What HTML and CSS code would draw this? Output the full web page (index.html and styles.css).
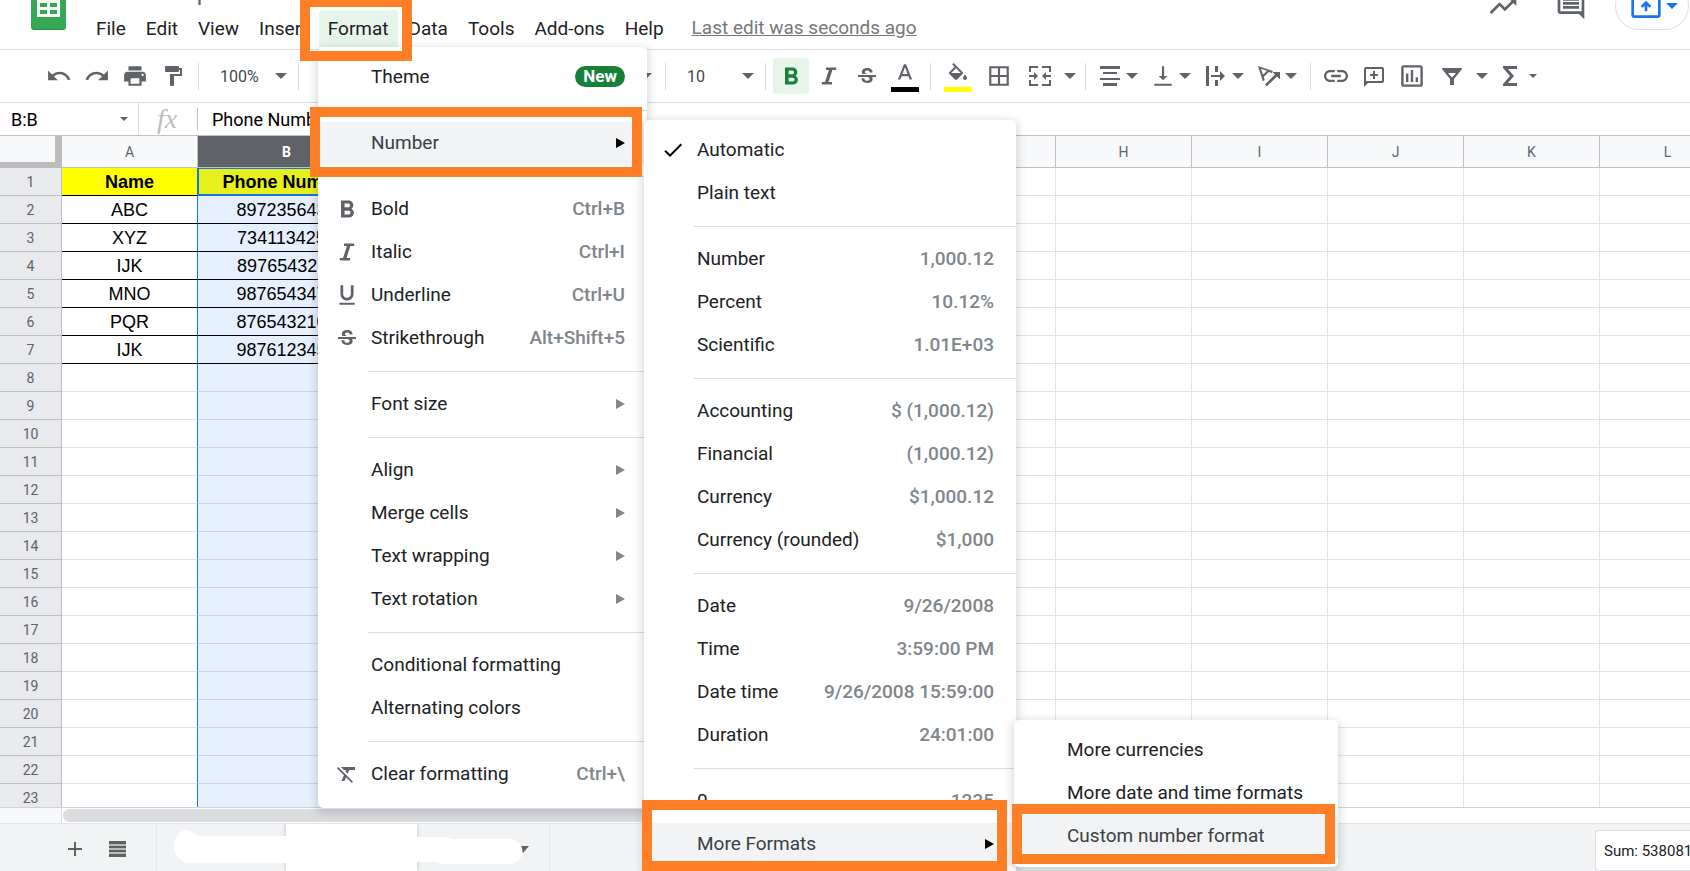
FILE: index.html
```html
<!DOCTYPE html>
<html lang="en">
    <head>
        <meta charset="UTF-8" />
        <meta name="viewport" content="width=device-width, initial-scale=1.0" />
        <title>Untitled spreadsheet</title>
        <link rel="stylesheet" href="styles.css">
    </head>
    <body>
        <header id="header">
            <svg class="logo" width="35" height="48" viewBox="0 0 35 48">
                <path fill="#34a853" d="M3 0h20l12 12v33a3 3 0 0 1-3 3H3a3 3 0 0 1-3-3V3a3 3 0 0 1 3-3z" />
                <path fill="#fff" d="M6 18h23v17H6z" />
                <path fill="#34a853" d="M9 21h7v4H9zM19 21h7v4h-7zM9 28h7v4H9zM19 28h7v4h-7z" />
                <path fill="#2a9048" d="M1 47h33l-2 1H3z" />
            </svg>

            <div class="titles">
                <div class="doc-title">Untitled spreadsheet</div>
                <nav class="menubar">
                    <button>File</button>
                    <button>Edit</button>
                    <button>View</button>
                    <button>Insert</button>
                    <button class="open">Format</button>
                    <button>Data</button>
                    <button>Tools</button>
                    <button>Add-ons</button>
                    <button>Help</button>
                    <a href="#" class="last-edit">Last edit was seconds ago</a>
                </nav>
            </div>

            <div class="actions">
                <button aria-label="Activity">
                    <svg width="32" height="32" viewBox="0 0 24 24"><path d="M16 6l2.29 2.29-4.88 4.88-4-4L2 16.59 3.41 18l6-6 4 4 6.3-6.29L22 12V6z" /></svg>
                </button>
                <button aria-label="Comments">
                    <svg width="32" height="32" viewBox="0 0 24 24"><path fill-rule="evenodd" d="M21.99 4c0-1.1-.89-2-1.99-2H4c-1.1 0-2 .9-2 2v12c0 1.1.9 2 2 2h14l4 4-.01-18zM20 4v12H4V4h16zM6 12h12v2H6zm0-3h12v2H6zm0-3h12v2H6z" /></svg>
                </button>
                <button class="present" aria-label="Present">
                    <svg width="32" height="32" viewBox="0 0 24 24"><path fill-rule="evenodd" d="M21 3H3c-1.11 0-2 .89-2 2v14c0 1.11.89 2 2 2h18c1.11 0 2-.89 2-2V5c0-1.11-.89-2-2-2zm0 16H3V5h18v14zM12 8l-4 4 1.4 1.4 1.6-1.6V16h2v-4.2l1.6 1.6L16 12z" /></svg>
                    <i class="caret"></i>
                </button>
            </div>
        </header>

        <div id="toolbar">
            <button class="tool" aria-label="Undo"><svg viewBox="1 1 22 22"><path d="M12.5 8c-2.65 0-5.05.99-6.9 2.6L2 7v9h9l-3.62-3.62c1.39-1.16 3.16-1.88 5.12-1.88 3.54 0 6.55 2.31 7.6 5.5l2.37-.78C21.08 11.03 17.15 8 12.5 8z" /></svg></button>
            <button class="tool" aria-label="Redo"><svg viewBox="1 1 22 22"><path d="M18.4 10.6C16.55 8.99 14.15 8 11.5 8c-4.65 0-8.58 3.03-9.96 7.22L3.9 16c1.05-3.19 4.05-5.5 7.6-5.5 1.95 0 3.73.72 5.12 1.88L13 16h9V7l-3.6 3.6z" /></svg></button>
            <button class="tool" aria-label="Print"><svg viewBox="1 1 22 22"><path d="M19 8H5c-1.66 0-3 1.34-3 3v6h4v4h12v-4h4v-6c0-1.66-1.34-3-3-3zm-3 11H8v-5h8v5zm3-7c-.55 0-1-.45-1-1s.45-1 1-1 1 .45 1 1-.45 1-1 1zm-1-9H6v4h12V3z" /></svg></button>
            <button class="tool" aria-label="Paint format"><svg viewBox="0 0 24 24"><path d="M18 4V3c0-.55-.45-1-1-1H5c-.55 0-1 .45-1 1v4c0 .55.45 1 1 1h12c.55 0 1-.45 1-1V6h1v4H9v11c0 .55.45 1 1 1h2c.55 0 1-.45 1-1v-9h8V4h-3z" /></svg></button>
            <i class="sep"></i>
            <button class="select">100%<i class="caret"></i></button>
            <i class="sep"></i>
            <button class="select font" aria-label="Font"><i class="caret"></i></button>
            <i class="sep"></i>
            <button class="select">10<i class="caret"></i></button>
            <i class="sep"></i>
            <button class="tool active" aria-label="Bold"><svg viewBox="2 1 20 20"><path d="M15.6 10.79c.97-.67 1.65-1.77 1.65-2.79 0-2.26-1.75-4-4-4H7v14h7.04c2.09 0 3.71-1.7 3.71-3.79 0-1.52-.86-2.82-2.15-3.42zM10 6.5h3c.83 0 1.5.67 1.5 1.5s-.67 1.5-1.5 1.5h-3v-3zm3.5 9H10v-3h3.5c.83 0 1.5.67 1.5 1.5s-.67 1.5-1.5 1.5z" /></svg></button>
            <button class="tool" aria-label="Italic"><svg viewBox="2 1 20 20"><path d="M9.5 4v2h2.4L8.7 16H6v2h8.5v-2h-2.9l3.2-10H18V4z" /></svg></button>
            <button class="tool" aria-label="Strikethrough"><svg viewBox="0 -1 24 24"><path d="M6.85 7.08C6.85 4.37 9.45 3 12.24 3c1.64 0 3 .49 3.9 1.28.77.65 1.46 1.73 1.46 3.24h-3.01c0-.31-.05-.59-.15-.85-.29-.86-1.2-1.28-2.25-1.28-1.86 0-2.34 1.02-2.34 1.7 0 .48.25.88.74 1.21.38.25.77.48 1.41.7H7.39c-.21-.34-.54-.89-.54-1.92zM21 12v-2H3v2h9.62c1.15.45 1.96.75 1.96 1.97 0 1-.81 1.67-2.28 1.67-1.54 0-2.93-.54-2.93-2.51H6.4c0 .55.08 1.13.24 1.58.81 2.29 3.29 3.3 5.67 3.3 2.27 0 5.3-.89 5.3-4.05 0-.3-.01-1.16-.48-1.94H21V12z" /></svg></button>
            <button class="tool color" aria-label="Text color"><svg viewBox="1 0 22 22"><path d="M11 3L5.5 17h2.25l1.12-3h6.25l1.12 3h2.25L13 3h-2zm-1.38 9L12 5.67 14.38 12H9.62z" /></svg><b class="swatch black"></b></button>
            <i class="sep"></i>
            <button class="tool wide color" aria-label="Fill color"><svg viewBox="0 -2 24 24"><path d="M16.56 8.94L7.62 0 6.21 1.41l2.38 2.38-5.15 5.15c-.59.59-.59 1.54 0 2.12l5.5 5.5c.29.29.68.44 1.06.44s.77-.15 1.06-.44l5.5-5.5c.59-.58.59-1.53 0-2.12zM5.21 10L10 5.21 14.79 10H5.21zM19 11.5s-2 2.17-2 3.5c0 1.1.9 2 2 2s2-.9 2-2c0-1.33-2-3.5-2-3.5z" /></svg><b class="swatch yellow"></b></button>
            <button class="tool wide" aria-label="Borders"><svg viewBox="1 1 22 22"><path d="M3 3v18h18V3H3zm8 16H5v-6h6v6zm0-8H5V5h6v6zm8 8h-6v-6h6v6zm0-8h-6V5h6v6z" /></svg></button>
            <button class="tool wide" aria-label="Merge cells"><svg viewBox="0 0 24 24"><path d="M1 2h9v2H3v4H1zM14 2h9v6h-2V4h-7zM1 16h2v4h7v2H1zM21 16h2v6h-9v-2h7zM1 11h5V8l4 4-4 4v-3H1zM23 11h-5V8l-4 4 4 4v-3h5z" /></svg></button>
            <button class="drop" aria-label="Merge type"><i class="caret"></i></button>
            <i class="sep"></i>
            <button class="combo" aria-label="Horizontal align"><svg viewBox="0 0 24 24"><path d="M2 2h20v3H2zM5 8h14v2H5zM2 14h20v2H2zM5 19h14v3H5z" /></svg><i class="caret"></i></button>
            <button class="combo" aria-label="Vertical align"><svg viewBox="1 1 22 22"><path d="M16 12h-3V3h-2v9H8l4 4 4-4zM4 19v2h16v-2H4z" /></svg><i class="caret"></i></button>
            <button class="combo" aria-label="Text wrapping"><svg viewBox="0 0 24 24"><path d="M2 2h3v20H2zM11 2h3v6h-3zM11 16h3v6h-3zM7 11h9V7l5 5-5 5v-4H7z" /></svg><i class="caret"></i></button>
            <button class="combo" aria-label="Text rotation"><svg viewBox="0 0 24 24"><path fill-rule="evenodd" d="M1 2l15 5-1.2 2-3-1-5 5 1 3-2 1.2zM4 4.800l2 6 4-4z" /><path d="M8 20.500L18 10.500 15.500 8H23v7.500L20 12.500 9.700 22.500z" /></svg><i class="caret"></i></button>
            <i class="sep"></i>
            <button class="tool" aria-label="Insert link"><svg viewBox="2 2 20 20"><path d="M3.9 12c0-1.71 1.39-3.1 3.1-3.1h4V7H7c-2.76 0-5 2.24-5 5s2.24 5 5 5h4v-1.9H7c-1.71 0-3.1-1.39-3.1-3.1zM8 13h8v-2H8v2zm9-6h-4v1.9h4c1.71 0 3.1 1.39 3.1 3.1s-1.39 3.1-3.1 3.1h-4V17h4c2.76 0 5-2.24 5-5s-2.24-5-5-5z" /></svg></button>
            <button class="tool" aria-label="Insert comment"><svg viewBox="0 0 24 24"><path fill-rule="evenodd" d="M4 3h16a2 2 0 0 1 2 2v12a2 2 0 0 1-2 2H6l-4 4V5a2 2 0 0 1 2-2zm0 2v12h16V5zM11 7h2v3h3v2h-3v3h-2v-3H8v-2h3z" /></svg></button>
            <button class="tool" aria-label="Insert chart"><svg viewBox="2 2 20 20"><path d="M9 17H7v-7h2v7zm4 0h-2V7h2v10zm4 0h-2v-4h2v4zm2 2H5V5h14v14zm0-16H5c-1.1 0-2 .9-2 2v14c0 1.1.9 2 2 2h14c1.1 0 2-.9 2-2V5c0-1.1-.9-2-2-2z" /></svg></button>
            <button class="tool wide" aria-label="Filter"><svg viewBox="0 0 24 24"><path fill-rule="evenodd" d="M2 4h20v1l-8 10v6h-4v-6L2 5zM8 9l4 4.500L16 9z" /></svg></button>
            <button class="drop" aria-label="Filter views"><i class="caret"></i></button>
            <button class="tool" aria-label="Functions"><svg viewBox="0 0 24 24"><path d="M5 2h14v3H10l6 7-6 7h9v3H5v-2l7-8-7-8z" /></svg></button>
            <i class="caret small"></i>
        </div>

        <div id="formula">
            <button class="name-box">B:B<i class="caret small"></i></button>
            <span class="fx">fx</span>
            <span class="formula-text">Phone Number</span>
        </div>

        <main id="grid">
            <table>
                <colgroup>
                    <col class="col-num">
                    <col class="col-std">
                    <col class="col-wide">
                    <col class="col-std" span="10">
                </colgroup>
                <thead>
                    <tr id="letters"><th class="corner"></th></tr>
                </thead>
                <tbody id="rows"></tbody>
            </table>
        </main>

        <div id="hscroll">
            <div class="gutter"></div>
            <div class="track"><div class="thumb"></div></div>
        </div>

        <footer id="tabs">
            <button class="tab-btn" aria-label="Add sheet"><svg width="16" height="16" viewBox="0 0 16 16"><path d="M7 1h2v6h6v2H9v6H7V9H1V7h6z" /></svg></button>
            <button class="tab-btn" aria-label="All sheets"><svg width="18" height="18" viewBox="0 0 18 18"><path fill="#b9bab9" d="M1 1h17v16H1z" /><path d="M1 1h17v3H1zM1 6h17v2H1zM1 10h17v2H1zM1 14h17v3H1z" /></svg></button>
            <div class="tab first">
                <svg width="129" height="46" viewBox="0 0 129 46"><path fill="#fff" d="M29 6a15 15 0 0 1 11 6h89v27H32q-4 0-6-2a14 15 0 0 1-9-15 14 15 0 0 1 12-16z" /></svg>
            </div>
            <div class="tab current"></div>
            <div class="tab last">
                <svg width="132" height="46" viewBox="0 0 132 46"><path d="M100 22h12l-6 7z" /><path fill="#fff" d="M0 13h28q4 0 6 2h59a12 12 0 0 1 0 25H26q-4 0-6-2H0z" /></svg>
            </div>
            <button class="sum">Sum: 538081</button>
        </footer>

        <div class="menu" id="format-menu">
            <div class="group">
                <button><i class="ico"></i>Theme<span class="new">New</span></button>
            </div>
            <div class="group">
                <button class="hover"><i class="ico"></i>Number<i class="arrow"></i></button>
            </div>
            <div class="group">
                <button><i class="ico"><svg viewBox="2 1 20 20"><path d="M15.6 10.79c.97-.67 1.65-1.77 1.65-2.79 0-2.26-1.75-4-4-4H7v14h7.04c2.09 0 3.71-1.7 3.71-3.79 0-1.52-.86-2.82-2.15-3.42zM10 6.5h3c.83 0 1.5.67 1.5 1.5s-.67 1.5-1.5 1.5h-3v-3zm3.5 9H10v-3h3.5c.83 0 1.5.67 1.5 1.5s-.67 1.5-1.5 1.5z" /></svg></i>Bold<kbd>Ctrl+B</kbd></button>
                <button><i class="ico"><svg viewBox="2 1 20 20"><path d="M9.5 4v2h2.4L8.7 16H6v2h8.5v-2h-2.9l3.2-10H18V4z" /></svg></i>Italic<kbd>Ctrl+I</kbd></button>
                <button><i class="ico"><svg viewBox="1 1 22 22"><path d="M12 17c3.31 0 6-2.69 6-6V3h-2.5v8c0 1.93-1.57 3.5-3.5 3.5S8.5 12.93 8.5 11V3H6v8c0 3.31 2.69 6 6 6zm-7 2v2h14v-2H5z" /></svg></i>Underline<kbd>Ctrl+U</kbd></button>
                <button><i class="ico"><svg viewBox="0 -1 24 24"><path d="M6.85 7.08C6.85 4.37 9.45 3 12.24 3c1.64 0 3 .49 3.9 1.28.77.65 1.46 1.73 1.46 3.24h-3.01c0-.31-.05-.59-.15-.85-.29-.86-1.2-1.28-2.25-1.28-1.86 0-2.34 1.02-2.34 1.7 0 .48.25.88.74 1.21.38.25.77.48 1.41.7H7.39c-.21-.34-.54-.89-.54-1.92zM21 12v-2H3v2h9.62c1.15.45 1.96.75 1.96 1.97 0 1-.81 1.67-2.28 1.67-1.54 0-2.93-.54-2.93-2.51H6.4c0 .55.08 1.13.24 1.58.81 2.29 3.29 3.3 5.67 3.3 2.27 0 5.3-.89 5.3-4.05 0-.3-.01-1.16-.48-1.94H21V12z" /></svg></i>Strikethrough<kbd>Alt+Shift+5</kbd></button>
            </div>
            <div class="group">
                <button><i class="ico"></i>Font size<i class="arrow"></i></button>
            </div>
            <div class="group">
                <button><i class="ico"></i>Align<i class="arrow"></i></button>
                <button><i class="ico"></i>Merge cells<i class="arrow"></i></button>
                <button><i class="ico"></i>Text wrapping<i class="arrow"></i></button>
                <button><i class="ico"></i>Text rotation<i class="arrow"></i></button>
            </div>
            <div class="group">
                <button><i class="ico"></i>Conditional formatting</button>
                <button><i class="ico"></i>Alternating colors</button>
            </div>
            <div class="group">
                <button><i class="ico"><svg viewBox="0 0 24 24"><path d="M3.27 5L2 6.27l6.97 6.97L6.5 19h3l1.57-3.66L16.73 21 18 19.73 3.27 5zM6 5v.18L8.82 8h2.4l-.72 1.68 2.1 2.1L14.21 8H20V5H6z" /></svg></i>Clear formatting<kbd>Ctrl+\</kbd></button>
            </div>
        </div>

        <div class="menu" id="number-menu">
            <div class="group">
                <button class="checked"><i class="ico"><svg viewBox="0 0 24 24"><path d="M9 16.200L4.800 12l-1.400 1.400L9 19 21 7l-1.400-1.400L9 16.200z" /></svg></i>Automatic</button>
                <button><i class="ico"></i>Plain text</button>
            </div>
            <div class="group">
                <button><i class="ico"></i>Number<kbd>1,000.12</kbd></button>
                <button><i class="ico"></i>Percent<kbd>10.12%</kbd></button>
                <button><i class="ico"></i>Scientific<kbd>1.01E+03</kbd></button>
            </div>
            <div class="group">
                <button><i class="ico"></i>Accounting<kbd>$ (1,000.12)</kbd></button>
                <button><i class="ico"></i>Financial<kbd>(1,000.12)</kbd></button>
                <button><i class="ico"></i>Currency<kbd>$1,000.12</kbd></button>
                <button><i class="ico"></i>Currency (rounded)<kbd>$1,000</kbd></button>
            </div>
            <div class="group">
                <button><i class="ico"></i>Date<kbd>9/26/2008</kbd></button>
                <button><i class="ico"></i>Time<kbd>3:59:00 PM</kbd></button>
                <button><i class="ico"></i>Date time<kbd>9/26/2008 15:59:00</kbd></button>
                <button><i class="ico"></i>Duration<kbd>24:01:00</kbd></button>
            </div>
            <div class="group">
                <button><i class="ico"></i>0<kbd>1235</kbd></button>
                <button class="hover"><i class="ico"></i>More Formats<i class="arrow"></i></button>
            </div>
        </div>

        <div class="menu" id="more-menu">
            <div class="group">
                <button><i class="ico"></i>More currencies</button>
                <button><i class="ico"></i>More date and time formats</button>
                <button class="hover"><i class="ico"></i>Custom number format</button>
            </div>
        </div>

        <div class="mark mark-format"></div>
        <div class="mark mark-number"></div>
        <div class="mark mark-more"></div>
        <div class="mark mark-custom"></div>

        <script>
            const cols = "ABCDEFGHIJKL".split("")
            const data = [
                ["Name", "Phone Number"],
                ["ABC", "8972356432"],
                ["XYZ", "7341134256"],
                ["IJK", "8976543211"],
                ["MNO", "9876543476"],
                ["PQR", "8765432109"],
                ["IJK", "9876123458"],
            ]

            const letters = document.getElementById("letters")
            cols.forEach((c) => {
                const th = document.createElement("th")
                th.textContent = c
                if (c === "B") th.className = "selected"
                letters.appendChild(th)
            })

            const rows = document.getElementById("rows")
            for (let i = 0; i < 23; i++) {
                const tr = document.createElement("tr")
                if (i < data.length) tr.className = i ? "filled" : "filled title"

                const th = document.createElement("th")
                th.textContent = i + 1
                tr.appendChild(th)

                cols.forEach((c, j) => {
                    const td = document.createElement("td")
                    if (data[i] && data[i][j]) td.textContent = data[i][j]
                    tr.appendChild(td)
                })
                rows.appendChild(tr)
            }
        </script>
    </body>
</html>
```

FILE: styles.css
```css
* {
    margin: 0;
    padding: 0;
    box-sizing: border-box;
}

body {
    display: flex;
    flex-direction: column;
    height: 100vh;
    overflow: hidden;
    position: relative;
    font-family: Roboto, "Liberation Sans", sans-serif;
    font-size: 18px;
    color: #202124;
    background-color: #fff;
}

button {
    font: inherit;
    color: inherit;
    border: none;
    background: none;
    white-space: nowrap;
}

svg {
    display: block;
    fill: #5f6368;
}

.caret {
    border: 6px solid transparent;
    border-top-color: #5f6368;
    border-bottom: none;
}

.caret.small {
    border-width: 4px;
    border-bottom: none;
}

/* header */

#header {
    display: flex;
    align-items: flex-end;
    flex: none;
    height: 50px;
    overflow: hidden;
    border-bottom: 1px solid #dadce0;
}

.logo {
    flex: none;
    margin: 0 21px 19px 31px;
}

.doc-title {
    padding-left: 9px;
    margin-bottom: 4px;
    font-size: 24px;
    line-height: 28px;
    color: #5f6368;
}

.menubar {
    display: flex;
    gap: 2px;
    margin-bottom: 2px;
}

.menubar button {
    height: 37px;
    padding: 0 9px;
    border-radius: 4px 4px 0 0;
    font-size: 19px;
}

.menubar .open {
    background-color: #e6f4ea;
}

.last-edit {
    margin-left: 17px;
    line-height: 36px;
    font-size: 19px;
    color: #777;
}

.actions {
    display: flex;
    align-items: flex-end;
    margin-left: auto;
    margin-right: 1px;
}

.actions button {
    margin: 0 0 27px 36px;
}

.actions .present {
    display: flex;
    align-items: center;
    gap: 4px;
    height: 49px;
    width: 74px;
    padding: 0 0 0 14px;
    margin: 0 0 19px 28px;
    border: 1px solid #dadce0;
    border-radius: 24px;
}

.present svg {
    fill: #1a73e8;
}

.present .caret {
    border-top-color: #1a73e8;
}

/* toolbar */

#toolbar {
    display: flex;
    align-items: center;
    flex: none;
    height: 53px;
    padding-left: 40px;
    overflow: hidden;
    border-bottom: 1px solid #dadce0;
}

#toolbar > * {
    flex: none;
}

#toolbar svg {
    width: 24px;
    height: 24px;
}

.tool {
    display: flex;
    flex-direction: column;
    align-items: center;
    justify-content: center;
    width: 36px;
    height: 36px;
    margin: 0 1px;
    border-radius: 4px;
}

.tool.wide {
    width: 39px;
}

.tool.active {
    background-color: #e6f4ea;
}

.tool.active svg {
    fill: #188038;
}

.swatch {
    width: 28px;
    height: 5px;
    margin-top: 2px;
}

.black {
    background-color: #000;
}

.yellow {
    background-color: #ff0;
}

.sep {
    width: 1px;
    height: 27px;
    margin: 0 6px;
    background-color: #dadce0;
}

.select {
    display: flex;
    align-items: center;
    justify-content: space-between;
    width: 87px;
    padding: 0 5px 0 15px;
    font-size: 16px;
    color: #444746;
}

.select.font {
    justify-content: flex-end;
    width: 354px;
    padding-right: 7px;
}

.drop {
    display: flex;
    justify-content: center;
    width: 19px;
}

.combo {
    display: flex;
    align-items: center;
    gap: 4px;
    width: 53px;
    padding-left: 6px;
}

/* formula bar */

#formula {
    display: flex;
    align-items: center;
    flex: none;
    height: 33px;
    border-bottom: 1px solid #c0c0c0;
    color: #000;
}

.name-box {
    display: flex;
    align-items: center;
    justify-content: space-between;
    width: 139px;
    height: 32px;
    padding: 0 10px 0 11px;
    border-right: 1px solid #dadce0;
}

.fx {
    width: 59px;
    padding-left: 18px;
    border-right: 1px solid #c0c0c0;
    font: italic 28px/22px "Liberation Serif", serif;
    color: #bdbdbd;
}

.formula-text {
    padding-left: 14px;
}

/* grid */

#grid {
    flex: 1;
    min-height: 0;
    overflow: hidden;
}

table {
    table-layout: fixed;
    width: 1736px;
    border-collapse: separate;
    border-spacing: 0;
}

.col-num {
    width: 62px;
}

.col-std {
    width: 136px;
}

.col-wide {
    width: 178px;
}

th {
    height: 28px;
    border-right: 1px solid #c0c0c0;
    border-bottom: 1px solid #c0c0c0;
    background-color: #e8eaed;
    font-size: 14px;
    font-weight: 400;
    line-height: 20px;
    color: #5f6368;
}

thead th {
    height: 32px;
    background-color: #f8f9fa;
}

thead .corner {
    border-right: 7px solid #bdbdbd;
    border-bottom: 6px solid #bdbdbd;
}

thead .selected {
    background-color: #5f6368;
    font-weight: 700;
    color: #fff;
}

td {
    height: 28px;
    border-right: 1px solid #e2e3e3;
    border-bottom: 1px solid #e2e3e3;
    font-family: "Liberation Sans", Arial, sans-serif;
    font-size: 18px;
    line-height: 20px;
    text-align: center;
    color: #000;
}

/* the selected column and its left edge */
td:nth-child(2) {
    border-right-color: #1a73e8;
}

td:nth-child(3) {
    border-right-color: #1a73e8;
    border-bottom-color: #c9d4e3;
    background-color: #e6effd;
}

.filled td:nth-child(2),
.filled td:nth-child(3) {
    border-bottom-color: #000;
}

.title td {
    font-weight: 700;
}

.title td:nth-child(2) {
    background-color: #ff0;
}

.title td:nth-child(3) {
    border-bottom-color: #1a73e8;
    background-color: #e6f01a;
    box-shadow: inset 1px 1px #1a73e8, inset 0 -1px #1a73e8;
}

/* scrollbar */

#hscroll {
    display: flex;
    flex: none;
    height: 16px;
    border-top: 1px solid #d0d2d4;
}

.gutter {
    width: 62px;
    background-color: #f8f9fa;
    border-right: 1px solid #dadce0;
}

.track {
    flex: 1;
    padding: 1px;
}

.thumb {
    width: 50%;
    height: 13px;
    border-radius: 7px;
    background-color: #dadce0;
}

/* sheet tabs */

#tabs {
    display: flex;
    flex: none;
    height: 48px;
    overflow: hidden;
    padding-left: 54px;
    border-top: 1px solid #e3e5e8;
    background-color: #f1f3f4;
}

.tab-btn {
    display: flex;
    align-items: center;
    justify-content: center;
    width: 42px;
    padding-top: 2px;
}

.tab-btn path:last-child {
    fill: #5f6360;
}

.tab.first {
    width: 130px;
    margin-left: 18px;
    border-left: 1px solid #e3e5e8;
}

.tab.current {
    width: 131px;
    background-color: #fff;
    box-shadow: 0 0 4px rgba(60, 64, 67, .3);
}

.tab.last {
    position: relative;
    width: 133px;
    border-right: 1px solid #e3e5e8;
}

.tab.first svg {
    position: relative;
}

.sum {
    width: 95px;
    height: 41px;
    margin: 6px 0 0 auto;
    padding-left: 8px;
    border: 1px solid #dadce0;
    border-right: none;
    border-radius: 4px 0 0 4px;
    background-color: #fff;
    font-size: 15px;
    text-align: left;
}

/* menus */

.menu {
    position: absolute;
    padding: 9px 0;
    border-radius: 5px;
    background-color: #fff;
    box-shadow: 0 3px 9px 2px rgba(60, 64, 67, .2);
}

#format-menu {
    top: 47px;
    left: 318px;
    width: 329px;
    padding-bottom: 12px;
}

#number-menu {
    top: 120px;
    left: 644px;
    width: 372px;
}

#more-menu {
    top: 720px;
    left: 1014px;
    width: 324px;
}

.group + .group {
    margin-top: 11px;
    padding-top: 11px;
    background: linear-gradient(#dadce0, #dadce0) 50px 0 / 100% 1px no-repeat;
    border-top: 1px solid transparent;
    background-origin: border-box;
}

.menu button {
    display: flex;
    align-items: center;
    width: 100%;
    height: 43px;
    padding: 0 22px 2px 17px;
    font-size: 19px;
}

.menu .hover {
    background-color: #f1f3f4;
    color: #3c4043;
}

.ico {
    width: 24px;
    height: 24px;
    margin-right: 12px;
}

.checked .ico svg {
    fill: #000;
}

.menu kbd,
.new,
.arrow {
    margin-left: auto;
}

.menu kbd {
    font-family: inherit;
    font-weight: 500;
    color: #80868b;
}

.arrow {
    border: 5px solid transparent;
    border-left: 9px solid #80868b;
    border-right: none;
}

.hover .arrow {
    border-left-color: #000;
}

.new {
    padding: 0 8px;
    border-radius: 11px;
    background-color: #188038;
    font-size: 17px;
    font-weight: 700;
    line-height: 21px;
    color: #fff;
}

/* highlight frames */

.mark {
    position: absolute;
    border: 10px solid #ff7f27;
}

.mark-format {
    top: -3px;
    left: 300px;
    width: 112px;
    height: 64px;
}

.mark-number {
    top: 107px;
    left: 310px;
    width: 332px;
    height: 70px;
}

.mark-more {
    top: 800px;
    left: 642px;
    width: 365px;
    height: 71px;
}

.mark-custom {
    top: 804px;
    left: 1012px;
    width: 323px;
    height: 60px;
}
```
